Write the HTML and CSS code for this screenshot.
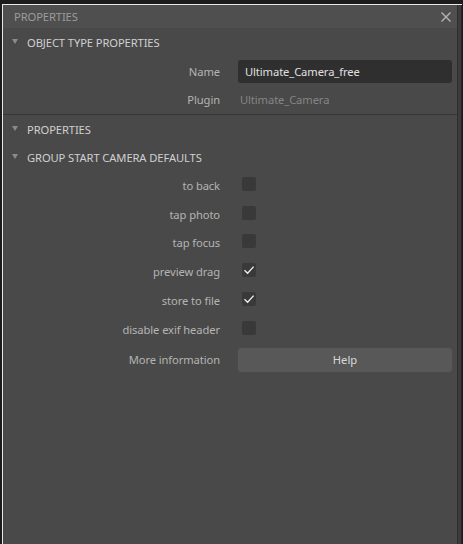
FILE: index.html
```html
<!DOCTYPE html>
<html>
<head>
<meta charset="utf-8">
<link rel="stylesheet" href="styles.css">
</head>
<body>
<div class="frame">
  <div class="panel">
    <div class="titlebar">
      <span class="title">PROPERTIES</span>
      <svg class="close" width="12" height="12" viewBox="0 0 12 12"><path d="M1.5 1.5 L10.5 10.5 M10.5 1.5 L1.5 10.5" stroke="#b4b4b4" stroke-width="1.4" fill="none"/></svg>
    </div>
    <div class="section-head h29"><span class="tri"></span>OBJECT TYPE PROPERTIES</div>
    <div class="row h28">
      <div class="label">Name</div>
      <div class="input">Ultimate_Camera_free</div>
    </div>
    <div class="row h29">
      <div class="label">Plugin</div>
      <div class="value-dim">Ultimate_Camera</div>
    </div>
    <div class="separator"></div>
    <div class="section-head h29"><span class="tri"></span>PROPERTIES</div>
    <div class="section-head h27"><span class="tri"></span>GROUP START CAMERA DEFAULTS</div>
    <div class="row cb-row">
      <div class="label">to back</div>
      <div class="cb"></div>
    </div>
    <div class="row cb-row">
      <div class="label">tap photo</div>
      <div class="cb"></div>
    </div>
    <div class="row cb-row">
      <div class="label">tap focus</div>
      <div class="cb"></div>
    </div>
    <div class="row cb-row">
      <div class="label">preview drag</div>
      <div class="cb"><svg width="14" height="14" viewBox="0 0 14 14"><path d="M2.5 7.2 L5.6 10.2 L11.6 3.6" stroke="#f0f0f0" stroke-width="1.3" fill="none"/></svg></div>
    </div>
    <div class="row cb-row">
      <div class="label">store to file</div>
      <div class="cb"><svg width="14" height="14" viewBox="0 0 14 14"><path d="M2.5 7.2 L5.6 10.2 L11.6 3.6" stroke="#f0f0f0" stroke-width="1.3" fill="none"/></svg></div>
    </div>
    <div class="row cb-row">
      <div class="label">disable exif header</div>
      <div class="cb"></div>
    </div>
    <div class="row help-row">
      <div class="label">More information</div>
      <div class="button">Help</div>
    </div>
  </div>
  <div class="rightstrip"></div>
</div>
</body>
</html>
```
FILE: styles.css
```css
html, body {
  margin: 0;
  padding: 0;
  height: 100%;
  background: #1c1c1c;
  font-family: "Noto Sans", "Open Sans", sans-serif;
  font-size: 11.2px;
}
.frame {
  display: flex;
  height: 540px;
  margin-top: 4px;
  margin-left: 2px;
  border-top: 1px solid #e8e8e8;
  border-left: 1px solid #e8e8e8;
  width: 460px;
  box-sizing: border-box;
}
.panel {
  flex: 1;
  background: #494949;
  display: flex;
  flex-direction: column;
  border-right: 1px solid #2e2e2e;
}
.rightstrip {
  width: 3px;
  background: #3c3c3c;
  border-right: 1px solid #262626;
}
.titlebar {
  height: 23px;
  background: #4f4f4f;
  display: flex;
  align-items: center;
  justify-content: space-between;
  padding: 0 5px 0 11px;
}
.title {
  color: #9c9c9c;
  font-size: 11.2px;
  letter-spacing: -0.1px;
}
.close { display: block; }
.section-head {
  display: flex;
  align-items: center;
  color: #d0d0d0;
  font-size: 11.2px;
  letter-spacing: -0.1px;
  padding-left: 9px;
}
.tri {
  width: 0;
  height: 0;
  border-left: 3.5px solid transparent;
  border-right: 3.5px solid transparent;
  border-top: 5px solid #8a8a8a;
  margin-right: 9px;
  margin-top: -2px;
}
.h29 { height: 29px; }
.h28 { height: 28px; }
.h27 { height: 27px; }
.row {
  display: grid;
  grid-template-columns: 217px 1fr;
  column-gap: 18px;
  align-items: center;
  padding-right: 5px;
}
.label {
  text-align: right;
  color: #b4b4b4;
  letter-spacing: -0.1px;
}
.input {
  height: 23px;
  background: #2f2f2f;
  border-radius: 3px;
  color: #e0e0e0;
  display: flex;
  align-items: center;
  padding-left: 7px;
  letter-spacing: -0.1px;
}
.value-dim {
  color: #858585;
  letter-spacing: -0.1px;
  padding-left: 2px;
}
.separator {
  height: 1px;
  background: #363636;
}
.cb-row { height: 28.8px; }
.cb {
  width: 14px;
  height: 14px;
  background: #393939;
  border-radius: 2px;
  margin-left: 4px;
  margin-top: -3px;
}
.cb svg { display: block; }
.help-row { height: 32px; }
.button {
  height: 24px;
  background: #585858;
  border-radius: 3px;
  color: #d8d8d8;
  display: flex;
  align-items: center;
  justify-content: center;
}
```
